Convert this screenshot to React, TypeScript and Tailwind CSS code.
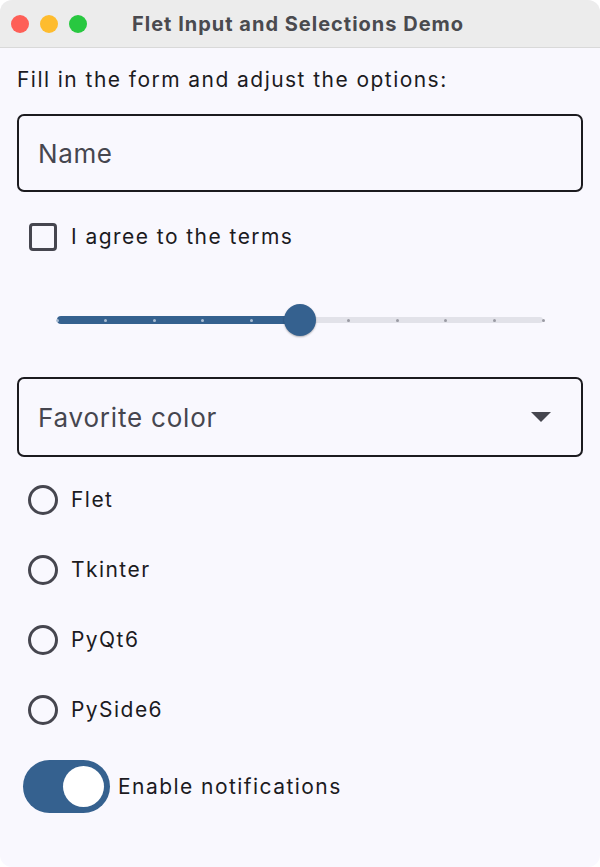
import React, { useState } from 'react';

const FONT = { fontFamily: 'Inter, "Noto Sans", sans-serif' };

const OPTIONS = ['Flet', 'Tkinter', 'PyQt6', 'PySide6'];

export default function App() {
  const [value] = useState(5);
  const steps = Array.from({ length: 11 }, (_, i) => i);

  return (
    <div className="w-[600px] h-[867px] bg-white" style={FONT}>
      <div className="w-full h-full rounded-[12px] overflow-hidden bg-[#f9f8fe] flex flex-col">
        {/* Title bar */}
        <div className="h-[48px] shrink-0 bg-[#ececec] border-b border-[#d9d9d9] flex items-center relative">
          <div className="flex items-center gap-[11px] pl-[11px]">
            <span className="w-[18px] h-[18px] rounded-full bg-[#fe5f57]" />
            <span className="w-[18px] h-[18px] rounded-full bg-[#febc2e]" />
            <span className="w-[18px] h-[18px] rounded-full bg-[#28c840]" />
          </div>
          <div className="absolute left-[132px] top-0 h-full flex items-center text-[20px] font-bold text-[#4a4a4f] tracking-[1px]">
            Flet Input and Selections Demo
          </div>
        </div>

        {/* Content */}
        <div className="flex flex-col px-[17px] text-[#1c1b1f]">
          <div className="mt-[20px] h-[24px] flex items-center text-[21px] tracking-[1.45px]">
            Fill in the form and adjust the options:
          </div>

          <div className="mt-[22px] h-[78px] rounded-[7px] border-[2px] border-[#1c1b1f] flex items-center pl-[19px] text-[26px] text-[#46464f] tracking-[0.6px]">
            Name
          </div>

          <div className="mt-[25px] h-[40px] flex items-center pl-[12px] gap-[14px]">
            <span className="w-[28px] h-[28px] rounded-[4px] border-[3px] border-[#46464f]" />
            <span className="text-[21px] tracking-[1.45px]">I agree to the terms</span>
          </div>

          <div className="mt-[39px] h-[48px] relative mx-[40px]">
            <div className="absolute left-0 right-0 top-[21px] h-[6px] rounded-full bg-[#e2e2e9]" />
            <div className="absolute left-0 top-[20px] h-[8px] rounded-full bg-[#35618f]" style={{ width: `${value * 10}%` }} />
            {steps.map((i) => (
              <span
                key={i}
                className={`absolute top-[23px] w-[3px] h-[3px] rounded-full -ml-[1.5px] ${i < value ? 'bg-[#a9bcd2]' : 'bg-[#9a9aa3]'}`}
                style={{ left: `${i * 10}%` }}
              />
            ))}
            <span
              className="absolute top-[8px] w-[32px] h-[32px] -ml-[16px] rounded-full bg-[#35618f] shadow-[0_1px_2px_rgba(0,0,0,0.3)]"
              style={{ left: `${value * 10}%` }}
            />
          </div>

          <div className="mt-[33px] h-[80px] rounded-[7px] border-[2px] border-[#1c1b1f] flex items-center justify-between pl-[19px] pr-[30px] text-[26px] text-[#46464f] tracking-[0.8px]">
            <span>Favorite color</span>
            <svg width="20" height="10" viewBox="0 0 20 10">
              <path d="M0 0 L20 0 L10 10 Z" fill="#46464f" />
            </svg>
          </div>

          <div className="mt-[8px] flex flex-col">
            {OPTIONS.map((o) => (
              <div key={o} className="h-[70px] flex items-center pl-[11px] gap-[13px]">
                <span className="w-[30px] h-[30px] rounded-full border-[3px] border-[#46464f]" />
                <span className="text-[21px] tracking-[1.45px]">{o}</span>
              </div>
            ))}
          </div>

          <div className="mt-[15px] h-[53px] flex items-center gap-[8px] pl-[6px]">
            <span className="w-[87px] h-[53px] rounded-full bg-[#35618f] flex items-center justify-end pr-[6px]">
              <span className="w-[41px] h-[41px] rounded-full bg-white" />
            </span>
            <span className="text-[21px] tracking-[1.45px]">Enable notifications</span>
          </div>
        </div>
      </div>
    </div>
  );
}
